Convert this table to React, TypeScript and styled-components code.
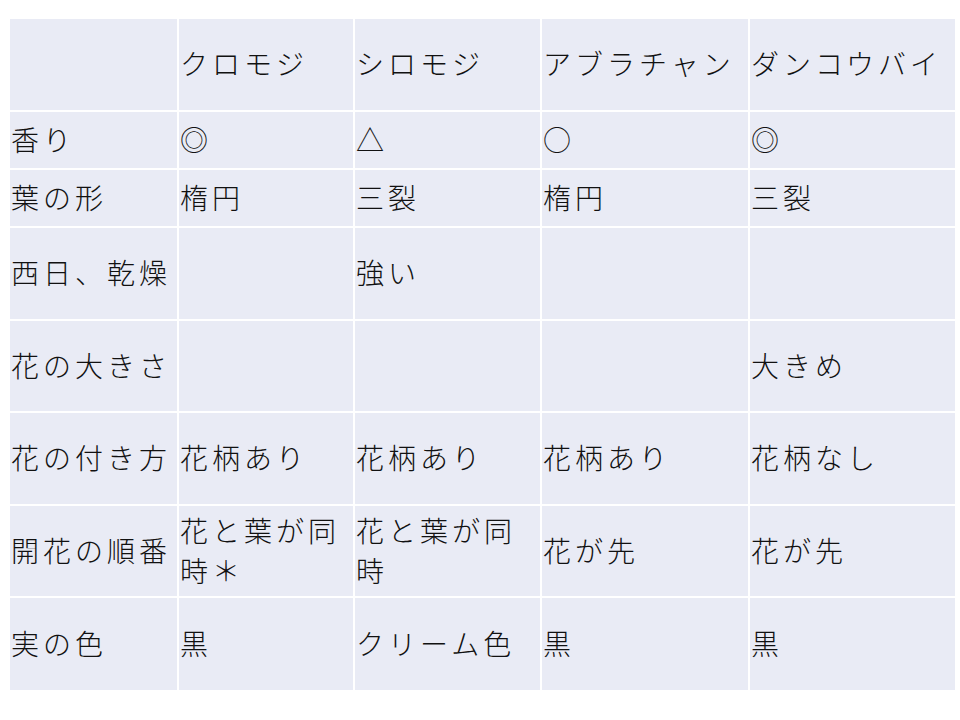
import styled, { createGlobalStyle } from 'styled-components'

const GlobalStyle = createGlobalStyle`
  html, body {
    margin: 0;
    padding: 0;
    background: #ffffff;
  }
`

const columns = ['', 'クロモジ', 'シロモジ', 'アブラチャン', 'ダンコウバイ']

const rows: { height: number; cells: string[] }[] = [
  { height: 56, cells: ['香り', '◎', '△', '○', '◎'] },
  { height: 56, cells: ['葉の形', '楕円', '三裂', '楕円', '三裂'] },
  { height: 91, cells: ['西日、乾燥', '', '強い', '', ''] },
  { height: 90, cells: ['花の大きさ', '', '', '', '大きめ'] },
  { height: 91, cells: ['花の付き方', '花柄あり', '花柄あり', '花柄あり', '花柄なし'] },
  { height: 90, cells: ['開花の順番', '花と葉が同時＊', '花と葉が同時', '花が先', '花が先'] },
  { height: 92, cells: ['実の色', '黒', 'クリーム色', '黒', '黒'] }
]

const Page = styled.div`
  width: 960px;
  height: 720px;
  padding: 19px 0 0 10px;
  box-sizing: border-box;
  font-family: 'Noto Sans CJK JP', 'Noto Sans', sans-serif;
`

const Table = styled.div<{ $rows: string }>`
  display: grid;
  grid-template-columns: 167px 174px 185px 206px 205px;
  grid-template-rows: ${(p) => p.$rows};
  gap: 2px;
  width: 945px;
  background: #ffffff;
`

const Cell = styled.div`
  display: flex;
  align-items: center;
  background: #e9ebf5;
  padding: 0 2px 3px 1px;
  font-size: 28px;
  font-weight: 300;
  letter-spacing: 4px;
  line-height: 40px;
  color: #111111;
  overflow: hidden;
  word-break: break-all;
`

const App = () => {
  const rowHeights = ['91px', ...rows.map((r) => `${r.height}px`)].join(' ')
  return (
    <>
      <GlobalStyle />
      <Page>
        <Table $rows={rowHeights}>
          {columns.map((c, i) => (
            <Cell key={'h' + i}>{c}</Cell>
          ))}
          {rows.map((r, ri) =>
            r.cells.map((c, ci) => <Cell key={ri + '-' + ci}>{c}</Cell>)
          )}
        </Table>
      </Page>
    </>
  )
}

export default App
